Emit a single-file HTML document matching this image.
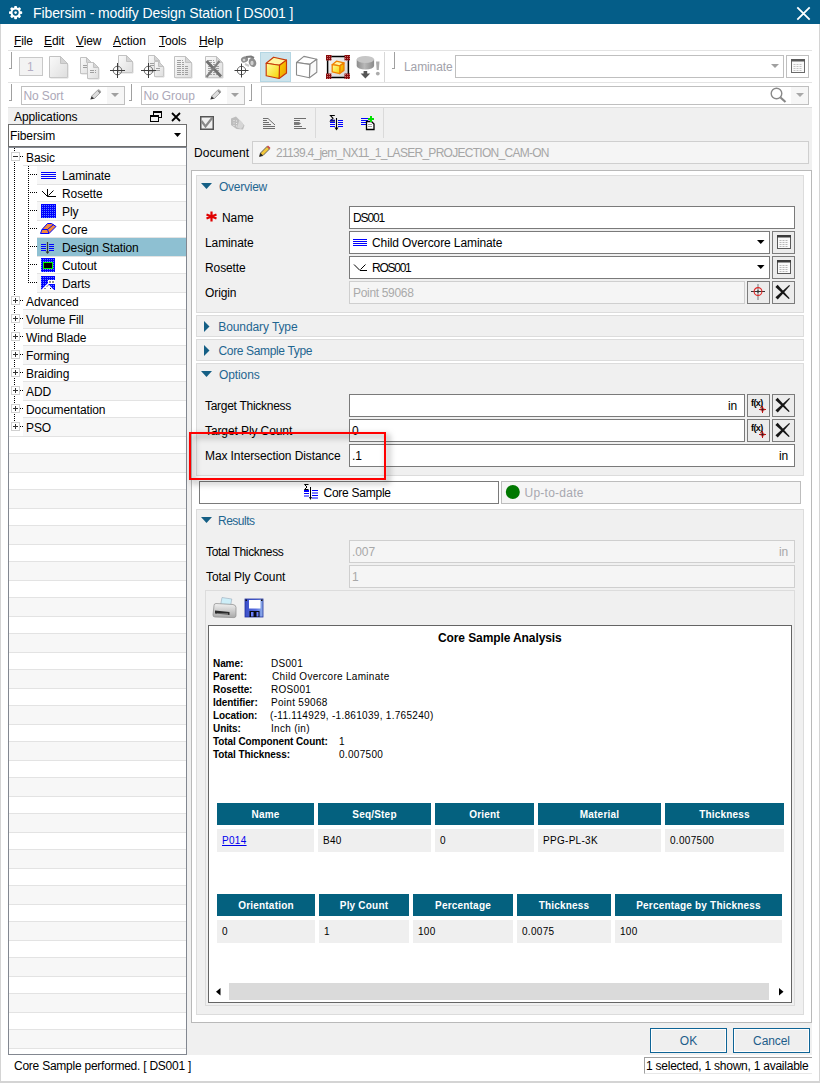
<!DOCTYPE html>
<html><head><meta charset="utf-8">
<style>
*{box-sizing:border-box}
html,body{margin:0;padding:0}
body{width:820px;height:1083px;position:relative;overflow:hidden;background:#fff;font-family:"Liberation Sans",sans-serif;color:#000}
.a{position:absolute;display:block}
.t{position:absolute;white-space:nowrap;letter-spacing:-0.1px}
u{text-decoration:underline;text-underline-offset:1px;text-decoration-thickness:1px}
</style></head><body>
<div class="a" style="left:0px;top:0px;width:820px;height:24px;background:#045d88"></div>
<svg class="a" style="left:9px;top:5.5px;" width="14" height="14" viewBox="0 0 14 14"><g transform="translate(6.6,6.6)" fill="#fff"><rect x="-1.4" y="-6.6" width="2.8" height="3" rx="0.8" transform="rotate(0)"/><rect x="-1.4" y="-6.6" width="2.8" height="3" rx="0.8" transform="rotate(45)"/><rect x="-1.4" y="-6.6" width="2.8" height="3" rx="0.8" transform="rotate(90)"/><rect x="-1.4" y="-6.6" width="2.8" height="3" rx="0.8" transform="rotate(135)"/><rect x="-1.4" y="-6.6" width="2.8" height="3" rx="0.8" transform="rotate(180)"/><rect x="-1.4" y="-6.6" width="2.8" height="3" rx="0.8" transform="rotate(225)"/><rect x="-1.4" y="-6.6" width="2.8" height="3" rx="0.8" transform="rotate(270)"/><rect x="-1.4" y="-6.6" width="2.8" height="3" rx="0.8" transform="rotate(315)"/><circle r="5.1"/><circle r="3.1" fill="#045d88"/><circle r="1.3" fill="#fff"/></g></svg>
<div class="t" style="left:33px;top:6px;font-size:14px;line-height:14px;color:#fff;letter-spacing:-0.1px">Fibersim - modify Design Station [ DS001 ]</div>
<svg class="a" style="left:796px;top:6px;" width="15" height="15" viewBox="0 0 15 15"><path d="M1.3 1.3L13.7 13.7M13.7 1.3L1.3 13.7" stroke="#fff" stroke-width="1.8"/></svg>
<div class="a" style="left:0px;top:24px;width:1px;height:1059px;background:#d4d4d4"></div>
<div class="a" style="left:819px;top:24px;width:1px;height:1059px;background:#d4d4d4"></div>
<div class="a" style="left:0px;top:1081px;width:820px;height:2px;background:#d4d4d4"></div>
<div class="t" style="left:14px;top:35px;font-size:12px;line-height:12px;"><u>F</u>ile</div>
<div class="t" style="left:44px;top:35px;font-size:12px;line-height:12px;"><u>E</u>dit</div>
<div class="t" style="left:76px;top:35px;font-size:12px;line-height:12px;"><u>V</u>iew</div>
<div class="t" style="left:113px;top:35px;font-size:12px;line-height:12px;"><u>A</u>ction</div>
<div class="t" style="left:159px;top:35px;font-size:12px;line-height:12px;"><u>T</u>ools</div>
<div class="t" style="left:199px;top:35px;font-size:12px;line-height:12px;"><u>H</u>elp</div>
<div class="a" style="left:8px;top:50px;width:804px;height:1px;background:#e3e3e3"></div>
<div class="a" style="left:8px;top:82px;width:804px;height:1px;background:#e3e3e3"></div>
<div class="a" style="left:11px;top:52px;width:1px;height:17px;background:#a0a0a0"></div>
<div class="a" style="left:9px;top:68px;width:2px;height:1px;background:#a0a0a0"></div>
<div class="a" style="left:19px;top:57px;width:24px;height:19px;border:1px solid #c8c8c8;background:#f3f3f3"></div>
<div class="t" style="left:27px;top:61px;font-size:12px;line-height:12px;color:#b4aec4">1</div>
<svg class="a" style="left:0;top:0" width="1" height="1"><defs><linearGradient id="pg" x1="0" y1="0" x2="1" y2="1"><stop offset="0" stop-color="#fafafa"/><stop offset="1" stop-color="#dedede"/></linearGradient><linearGradient id="cy" x1="0" y1="0" x2="1" y2="0"><stop offset="0" stop-color="#8c8c8c"/><stop offset="0.45" stop-color="#b8b8b8"/><stop offset="1" stop-color="#8a8a8a"/></linearGradient><linearGradient id="yf" x1="0" y1="0" x2="1" y2="1"><stop offset="0" stop-color="#ffffa0"/><stop offset="1" stop-color="#f6d200"/></linearGradient><linearGradient id="ys" x1="0" y1="0" x2="1" y2="1"><stop offset="0" stop-color="#ffd200"/><stop offset="1" stop-color="#e89a00"/></linearGradient></defs></svg>
<svg class="a" style="left:0;top:0;overflow:visible" width="820" height="140"><path d="M49.5 56.5H60.5L67.5 63.5V77.5H49.5Z" fill="url(#pg)" stroke="#c2c2c2" stroke-width="1"/><path d="M50.5 78.1H68.1V64.5" fill="none" stroke="#d8d8d8" stroke-width="0.8"/><path d="M60.5 56.5V63.5H67.5Z" fill="#d4d4d4" stroke="#c2c2c2" stroke-width="1"/><path d="M80.5 57.5H86.5L91.5 62.5V73.5H80.5Z" fill="url(#pg)" stroke="#c2c2c2" stroke-width="1"/><path d="M81.5 74.1H92.1V63.5" fill="none" stroke="#d8d8d8" stroke-width="0.8"/><path d="M86.5 57.5V62.5H91.5Z" fill="#d4d4d4" stroke="#c2c2c2" stroke-width="1"/><path d="M83 65.5H88" stroke="#a0a0a0" stroke-width="1" stroke-dasharray="4 1 2 1 5 1"/><path d="M83 67.5H88" stroke="#a0a0a0" stroke-width="1" stroke-dasharray="4 1 2 1 5 1"/><path d="M87.5 62.5H93.5L98.5 67.5V78.5H87.5Z" fill="url(#pg)" stroke="#c2c2c2" stroke-width="1"/><path d="M88.5 79.1H99.1V68.5" fill="none" stroke="#d8d8d8" stroke-width="0.8"/><path d="M93.5 62.5V67.5H98.5Z" fill="#d4d4d4" stroke="#c2c2c2" stroke-width="1"/><path d="M90 70.5H96" stroke="#a0a0a0" stroke-width="1" stroke-dasharray="4 1 2 1 5 1"/><path d="M90 72.5H96" stroke="#a0a0a0" stroke-width="1" stroke-dasharray="4 1 2 1 5 1"/><path d="M118.5 55.5H126.5L132.5 61.5V72.5H118.5Z" fill="url(#pg)" stroke="#c2c2c2" stroke-width="1"/><path d="M119.5 73.1H133.1V62.5" fill="none" stroke="#d8d8d8" stroke-width="0.8"/><path d="M126.5 55.5V61.5H132.5Z" fill="#d4d4d4" stroke="#c2c2c2" stroke-width="1"/><circle cx="117.5" cy="70.5" r="4.3" fill="none" stroke="#6a6a6a" stroke-width="1"/><path d="M110.0 70.5H125.0M117.5 63.0V78.0" stroke="#3c3c3c" stroke-width="1"/><path d="M148.5 55.5H154.5L159.5 60.5V71.5H148.5Z" fill="url(#pg)" stroke="#c2c2c2" stroke-width="1"/><path d="M149.5 72.1H160.1V61.5" fill="none" stroke="#d8d8d8" stroke-width="0.8"/><path d="M154.5 55.5V60.5H159.5Z" fill="#d4d4d4" stroke="#c2c2c2" stroke-width="1"/><path d="M150 63.5H155" stroke="#a0a0a0" stroke-width="1" stroke-dasharray="4 1 2 1 5 1"/><path d="M150 65.5H155" stroke="#a0a0a0" stroke-width="1" stroke-dasharray="4 1 2 1 5 1"/><path d="M154.5 61.5H158.5L163.5 66.5V76.5H154.5Z" fill="url(#pg)" stroke="#c2c2c2" stroke-width="1"/><path d="M155.5 77.1H164.1V67.5" fill="none" stroke="#d8d8d8" stroke-width="0.8"/><path d="M158.5 61.5V66.5H163.5Z" fill="#d4d4d4" stroke="#c2c2c2" stroke-width="1"/><path d="M156 68.5H161" stroke="#a0a0a0" stroke-width="1" stroke-dasharray="4 1 2 1 5 1"/><path d="M156 70.5H161" stroke="#a0a0a0" stroke-width="1" stroke-dasharray="4 1 2 1 5 1"/><circle cx="148.5" cy="70.5" r="4.3" fill="none" stroke="#6a6a6a" stroke-width="1"/><path d="M141.0 70.5H156.0M148.5 63.0V78.0" stroke="#3c3c3c" stroke-width="1"/><path d="M174.5 56.5H185.5L191.5 62.5V77.5H174.5Z" fill="url(#pg)" stroke="#c2c2c2" stroke-width="1"/><path d="M175.5 78.1H192.1V63.5" fill="none" stroke="#d8d8d8" stroke-width="0.8"/><path d="M185.5 56.5V62.5H191.5Z" fill="#d4d4d4" stroke="#c2c2c2" stroke-width="1"/><path d="M177 60.5H183" stroke="#a0a0a0" stroke-width="1" stroke-dasharray="4 1 2 1 5 1"/><path d="M177 62.5H185" stroke="#a0a0a0" stroke-width="1" stroke-dasharray="4 1 2 1 5 1"/><path d="M177 64.5H185" stroke="#a0a0a0" stroke-width="1" stroke-dasharray="4 1 2 1 5 1"/><path d="M177 66.5H188" stroke="#a0a0a0" stroke-width="1" stroke-dasharray="4 1 2 1 5 1"/><path d="M177 68.5H188" stroke="#a0a0a0" stroke-width="1" stroke-dasharray="4 1 2 1 5 1"/><path d="M177 70.5H188" stroke="#a0a0a0" stroke-width="1" stroke-dasharray="4 1 2 1 5 1"/><path d="M177 72.5H188" stroke="#a0a0a0" stroke-width="1" stroke-dasharray="4 1 2 1 5 1"/><path d="M177 74.5H188" stroke="#a0a0a0" stroke-width="1" stroke-dasharray="4 1 2 1 5 1"/><path d="M205.5 56.5H216.5L222.5 62.5V77.5H205.5Z" fill="url(#pg)" stroke="#c2c2c2" stroke-width="1"/><path d="M206.5 78.1H223.1V63.5" fill="none" stroke="#d8d8d8" stroke-width="0.8"/><path d="M216.5 56.5V62.5H222.5Z" fill="#d4d4d4" stroke="#c2c2c2" stroke-width="1"/><path d="M208 60.5H214" stroke="#a0a0a0" stroke-width="1" stroke-dasharray="4 1 2 1 5 1"/><path d="M208 62.5H216" stroke="#a0a0a0" stroke-width="1" stroke-dasharray="4 1 2 1 5 1"/><path d="M208 64.5H216" stroke="#a0a0a0" stroke-width="1" stroke-dasharray="4 1 2 1 5 1"/><path d="M208 66.5H219" stroke="#a0a0a0" stroke-width="1" stroke-dasharray="4 1 2 1 5 1"/><path d="M208 68.5H219" stroke="#a0a0a0" stroke-width="1" stroke-dasharray="4 1 2 1 5 1"/><path d="M208 70.5H219" stroke="#a0a0a0" stroke-width="1" stroke-dasharray="4 1 2 1 5 1"/><path d="M208 72.5H219" stroke="#a0a0a0" stroke-width="1" stroke-dasharray="4 1 2 1 5 1"/><path d="M208 74.5H219" stroke="#a0a0a0" stroke-width="1" stroke-dasharray="4 1 2 1 5 1"/><path d="M206.5 61L221 76.5" stroke="#707070" stroke-width="2.8"/><path d="M219.5 61L206.5 77" stroke="#808080" stroke-width="2.1"/><ellipse cx="244.5" cy="59.5" rx="3.6" ry="3" fill="#8e8e8e" transform="rotate(-20 244.5 59.5)"/><ellipse cx="252.5" cy="62.5" rx="3.6" ry="4.6" fill="#8e8e8e" transform="rotate(-25 252.5 62.5)"/><path d="M246 57L251 56.5L254 58" stroke="#7a7a7a" stroke-width="2" fill="none"/><ellipse cx="252" cy="63" rx="1.6" ry="2.2" fill="#d0d0d0"/><ellipse cx="244" cy="60" rx="1.4" ry="1.2" fill="#d0d0d0"/><path d="M245 64L249 66" stroke="#c8c8c8" stroke-width="2"/><circle cx="241.5" cy="70.5" r="4.2" fill="none" stroke="#6a6a6a" stroke-width="1"/><path d="M234.5 70.5H248.5M241.5 63.5V77.5" stroke="#3c3c3c" stroke-width="1"/></svg>
<div class="a" style="left:260px;top:52px;width:31px;height:30px;background:#cde4ec;border:1px solid #b4d6e3"></div>
<svg class="a" style="left:0;top:0;overflow:visible" width="820" height="140"><path d="M266.20 63.30L273.60 57.20L286.50 60.10L279.50 65.20Z" fill="#fff6a0" stroke="#c83a08" stroke-width="1.15" stroke-linejoin="round"/><path d="M279.50 65.20L286.50 60.10L286.50 73.00L279.10 78.50Z" fill="url(#ys)" stroke="#c83a08" stroke-width="1.15" stroke-linejoin="round"/><path d="M266.20 63.30L279.50 65.20L279.10 78.50L266.20 75.80Z" fill="url(#yf)" stroke="#c83a08" stroke-width="1.15" stroke-linejoin="round"/><path d="M296.50 62.50L303.90 56.40L316.80 59.30L309.80 64.40Z" fill="#fff" stroke="#8a8a8a" stroke-width="1.1" stroke-linejoin="round"/><path d="M309.80 64.40L316.80 59.30L316.80 72.20L309.40 77.70Z" fill="#fafafa" stroke="#8a8a8a" stroke-width="1.1" stroke-linejoin="round"/><path d="M296.50 62.50L309.80 64.40L309.40 77.70L296.50 75.00Z" fill="#fff" stroke="#8a8a8a" stroke-width="1.1" stroke-linejoin="round"/></svg>
<svg class="a" style="left:325px;top:54px;" width="26" height="26" viewBox="0 0 26 26"><defs><linearGradient id="sf" x1="0" y1="0" x2="1" y2="1"><stop offset="0" stop-color="#f4f4f4"/><stop offset="1" stop-color="#d4d4d4"/></linearGradient><pattern id="ck" width="2" height="2" patternUnits="userSpaceOnUse"><rect width="2" height="2" fill="#8a0c0c"/><rect width="1" height="1" fill="#c87070"/></pattern></defs><rect x="2.6" y="2.6" width="20.8" height="20.8" rx="2.5" fill="url(#sf)" stroke="#000" stroke-width="1.5"/><rect x="1" y="1" width="5.5" height="5.5" fill="url(#ck)"/><rect x="19.5" y="1" width="5.5" height="5.5" fill="url(#ck)"/><rect x="1" y="19.5" width="5.5" height="5.5" fill="url(#ck)"/><rect x="19.5" y="19.5" width="5.5" height="5.5" fill="url(#ck)"/></svg>
<svg class="a" style="left:0;top:0;overflow:visible" width="820" height="140"><path d="M332.20 64.73L336.49 61.20L343.97 62.88L339.91 65.84Z" fill="#fff6a0" stroke="#f08000" stroke-width="1.3" stroke-linejoin="round"/><path d="M339.91 65.84L343.97 62.88L343.97 70.36L339.68 73.55Z" fill="url(#ys)" stroke="#f08000" stroke-width="1.3" stroke-linejoin="round"/><path d="M332.20 64.73L339.91 65.84L339.68 73.55L332.20 71.98Z" fill="url(#yf)" stroke="#f08000" stroke-width="1.3" stroke-linejoin="round"/></svg>
<svg class="a" style="left:356px;top:55px;" width="25" height="24" viewBox="0 0 25 24"><path d="M0.7 4.5V11A8.7 3.4 0 0 0 18.1 11V4.5Z" fill="url(#cy)"/><ellipse cx="9.4" cy="4.5" rx="8.7" ry="3.4" fill="#c6c6c6"/><path d="M7.6 16H11.2V18.5H14.2L9.4 23.5L4.6 18.5H7.6Z" fill="#555"/><path d="M20 6.5H23.5L22.8 15H20.7Z" fill="#ababab"/><circle cx="21.8" cy="18.6" r="1.9" fill="#ababab"/></svg>
<div class="a" style="left:384px;top:52px;width:1px;height:30px;background:#d8d8d8"></div>
<div class="a" style="left:394px;top:52px;width:1px;height:17px;background:#a0a0a0"></div>
<div class="a" style="left:392px;top:68px;width:2px;height:1px;background:#a0a0a0"></div>
<div class="t" style="left:404px;top:61px;font-size:12px;line-height:12px;color:#a2a2aa">Laminate</div>
<div class="a" style="left:455px;top:55px;width:329px;height:23px;border:1px solid #bfbfbf;background:#fff"></div>
<svg class="a" style="left:771px;top:64px;" width="9" height="5" viewBox="0 0 9 5"><path d="M0 0H8L4 4Z" fill="#a0a0a0"/></svg>
<div class="a" style="left:786px;top:55px;width:23px;height:23px;border:1px solid #bfbfbf;background:#fff"></div>
<svg class="a" style="left:791px;top:59px;" width="15" height="15" viewBox="0 0 15 15"><rect x="0.5" y="0.5" width="13" height="13" fill="#fafafa" stroke="#6a6a6a"/><rect x="0" y="0" width="14" height="2.5" fill="#5a5a5a"/><path d="M2.5 5.5H11.5M2.5 7.5H11.5M2.5 9.5H11.5M2.5 11.5H11.5" stroke="#c4c4c4" stroke-width="1" stroke-dasharray="2 1"/></svg>
<div class="a" style="left:11px;top:84px;width:1px;height:17px;background:#a0a0a0"></div>
<div class="a" style="left:9px;top:100px;width:2px;height:1px;background:#a0a0a0"></div>
<div class="a" style="left:21px;top:86px;width:104px;height:19px;border:1px solid #bfbfbf;background:#fff"></div>
<div class="t" style="left:23.5px;top:90px;font-size:12px;line-height:12px;color:#aca8b8">No Sort</div>
<div class="a" style="left:107px;top:87px;width:17px;height:17px;background:#f6f6f6"></div>
<svg class="a" style="left:111px;top:93px;" width="9" height="5" viewBox="0 0 9 5"><path d="M0 0H8L4 4Z" fill="#a0a0a0"/></svg>
<svg class="a" style="left:89px;top:87px;" width="15" height="15" viewBox="0 0 15 15"><g transform="translate(0 1) scale(0.86)"><path d="M3 9.5L10 2.5Q11.3 1.5 12.5 2.7L13 3.3Q14 4.5 13 5.5L6 12.5Z" fill="#dcdcdc" stroke="#8c8c8c" stroke-width="0.9"/><path d="M3 9.5L6 12.5L1.5 13.5Z" fill="#333"/><path d="M10.5 3L13 5.5" stroke="#777" stroke-width="1.3"/></g></svg>
<div class="a" style="left:131px;top:84px;width:1px;height:17px;background:#a0a0a0"></div>
<div class="a" style="left:129px;top:100px;width:2px;height:1px;background:#a0a0a0"></div>
<div class="a" style="left:141px;top:86px;width:104px;height:19px;border:1px solid #bfbfbf;background:#fff"></div>
<div class="t" style="left:143.5px;top:90px;font-size:12px;line-height:12px;color:#aca8b8">No Group</div>
<div class="a" style="left:227px;top:87px;width:17px;height:17px;background:#f6f6f6"></div>
<svg class="a" style="left:231px;top:93px;" width="9" height="5" viewBox="0 0 9 5"><path d="M0 0H8L4 4Z" fill="#a0a0a0"/></svg>
<svg class="a" style="left:209px;top:87px;" width="15" height="15" viewBox="0 0 15 15"><g transform="translate(0 1) scale(0.86)"><path d="M3 9.5L10 2.5Q11.3 1.5 12.5 2.7L13 3.3Q14 4.5 13 5.5L6 12.5Z" fill="#dcdcdc" stroke="#8c8c8c" stroke-width="0.9"/><path d="M3 9.5L6 12.5L1.5 13.5Z" fill="#333"/><path d="M10.5 3L13 5.5" stroke="#777" stroke-width="1.3"/></g></svg>
<div class="a" style="left:251px;top:84px;width:1px;height:17px;background:#a0a0a0"></div>
<div class="a" style="left:249px;top:100px;width:2px;height:1px;background:#a0a0a0"></div>
<div class="a" style="left:261px;top:86px;width:548px;height:19px;border:1px solid #bfbfbf;background:#fff"></div>
<div class="a" style="left:791px;top:87px;width:17px;height:17px;background:#f6f6f6"></div>
<svg class="a" style="left:796px;top:93px;" width="9" height="5" viewBox="0 0 9 5"><path d="M0 0H8L4 4Z" fill="#a8a8a8"/></svg>
<svg class="a" style="left:770px;top:87px;" width="18" height="16" viewBox="0 0 18 16"><circle cx="6.5" cy="6.5" r="5.3" fill="none" stroke="#888" stroke-width="1.4"/><path d="M10.5 10.5L15.5 15" stroke="#888" stroke-width="2.2"/></svg>
<div class="a" style="left:8px;top:107px;width:804px;height:948px;background:#f0f0f0"></div>
<div class="a" style="left:8px;top:107px;width:804px;height:1px;background:#dcdcdc"></div>
<div class="t" style="left:14px;top:111px;font-size:12px;line-height:12px;">Applications</div>
<svg class="a" style="left:150px;top:111px;" width="12" height="11" viewBox="0 0 12 11"><rect x="3.5" y="0.5" width="8" height="6" fill="none" stroke="#000"/><rect x="3" y="0" width="9" height="2" fill="#000"/><rect x="0.5" y="4.5" width="8" height="6" fill="#f0f0f0" stroke="#000"/><rect x="0" y="4" width="9" height="2" fill="#000"/></svg>
<svg class="a" style="left:171px;top:112px;" width="10" height="10" viewBox="0 0 10 10"><path d="M1 1L9 9M9 1L1 9" stroke="#000" stroke-width="1.8"/></svg>
<div class="a" style="left:8px;top:124px;width:179px;height:23px;border:1px solid #6e6e6e;background:#fff"></div>
<div class="t" style="left:10px;top:130px;font-size:12px;line-height:12px;">Fibersim</div>
<svg class="a" style="left:174px;top:133px;" width="8" height="5" viewBox="0 0 8 5"><path d="M0 0H7L3.5 4Z" fill="#000"/></svg>
<div class="a" style="left:8px;top:147px;width:179px;height:908px;border:1px solid #828790;background:#fff"></div>
<div class="a" style="left:23px;top:165px;width:163px;height:1px;background:#e3e3e3"></div>
<div class="a" style="left:37px;top:166px;width:149px;height:18px;background:#f7f7f7"></div>
<div class="a" style="left:37px;top:184px;width:149px;height:1px;background:#e3e3e3"></div>
<div class="a" style="left:37px;top:201px;width:149px;height:1px;background:#e3e3e3"></div>
<div class="a" style="left:37px;top:202px;width:149px;height:18px;background:#f7f7f7"></div>
<div class="a" style="left:37px;top:220px;width:149px;height:1px;background:#e3e3e3"></div>
<div class="a" style="left:37px;top:237px;width:149px;height:1px;background:#e3e3e3"></div>
<div class="a" style="left:37px;top:238px;width:149px;height:18px;background:#8ec0d2"></div>
<div class="a" style="left:37px;top:256px;width:149px;height:1px;background:#e3e3e3"></div>
<div class="a" style="left:37px;top:273px;width:149px;height:1px;background:#e3e3e3"></div>
<div class="a" style="left:37px;top:274px;width:149px;height:18px;background:#f7f7f7"></div>
<div class="a" style="left:37px;top:292px;width:149px;height:1px;background:#e3e3e3"></div>
<div class="a" style="left:23px;top:309px;width:163px;height:1px;background:#e3e3e3"></div>
<div class="a" style="left:23px;top:310px;width:163px;height:18px;background:#f7f7f7"></div>
<div class="a" style="left:23px;top:328px;width:163px;height:1px;background:#e3e3e3"></div>
<div class="a" style="left:23px;top:345px;width:163px;height:1px;background:#e3e3e3"></div>
<div class="a" style="left:23px;top:346px;width:163px;height:18px;background:#f7f7f7"></div>
<div class="a" style="left:23px;top:364px;width:163px;height:1px;background:#e3e3e3"></div>
<div class="a" style="left:23px;top:381px;width:163px;height:1px;background:#e3e3e3"></div>
<div class="a" style="left:23px;top:382px;width:163px;height:18px;background:#f7f7f7"></div>
<div class="a" style="left:23px;top:400px;width:163px;height:1px;background:#e3e3e3"></div>
<div class="a" style="left:23px;top:417px;width:163px;height:1px;background:#e3e3e3"></div>
<div class="a" style="left:23px;top:418px;width:163px;height:18px;background:#f7f7f7"></div>
<div class="a" style="left:9px;top:436px;width:177px;height:1px;background:#e3e3e3"></div>
<div class="a" style="left:9px;top:453px;width:177px;height:1px;background:#e3e3e3"></div>
<div class="a" style="left:9px;top:454px;width:177px;height:18px;background:#f7f7f7"></div>
<div class="a" style="left:9px;top:472px;width:177px;height:1px;background:#e3e3e3"></div>
<div class="a" style="left:9px;top:489px;width:177px;height:1px;background:#e3e3e3"></div>
<div class="a" style="left:9px;top:490px;width:177px;height:18px;background:#f7f7f7"></div>
<div class="a" style="left:9px;top:508px;width:177px;height:1px;background:#e3e3e3"></div>
<div class="a" style="left:9px;top:525px;width:177px;height:1px;background:#e3e3e3"></div>
<div class="a" style="left:9px;top:526px;width:177px;height:18px;background:#f7f7f7"></div>
<div class="a" style="left:9px;top:544px;width:177px;height:1px;background:#e3e3e3"></div>
<div class="a" style="left:9px;top:561px;width:177px;height:1px;background:#e3e3e3"></div>
<div class="a" style="left:9px;top:562px;width:177px;height:18px;background:#f7f7f7"></div>
<div class="a" style="left:9px;top:580px;width:177px;height:1px;background:#e3e3e3"></div>
<div class="a" style="left:9px;top:597px;width:177px;height:1px;background:#e3e3e3"></div>
<div class="a" style="left:9px;top:598px;width:177px;height:18px;background:#f7f7f7"></div>
<div class="a" style="left:9px;top:616px;width:177px;height:1px;background:#e3e3e3"></div>
<div class="a" style="left:9px;top:633px;width:177px;height:1px;background:#e3e3e3"></div>
<div class="a" style="left:9px;top:634px;width:177px;height:18px;background:#f7f7f7"></div>
<div class="a" style="left:9px;top:652px;width:177px;height:1px;background:#e3e3e3"></div>
<div class="a" style="left:9px;top:669px;width:177px;height:1px;background:#e3e3e3"></div>
<div class="a" style="left:9px;top:670px;width:177px;height:18px;background:#f7f7f7"></div>
<div class="a" style="left:9px;top:688px;width:177px;height:1px;background:#e3e3e3"></div>
<div class="a" style="left:9px;top:705px;width:177px;height:1px;background:#e3e3e3"></div>
<div class="a" style="left:9px;top:706px;width:177px;height:18px;background:#f7f7f7"></div>
<div class="a" style="left:9px;top:724px;width:177px;height:1px;background:#e3e3e3"></div>
<div class="a" style="left:9px;top:741px;width:177px;height:1px;background:#e3e3e3"></div>
<div class="a" style="left:9px;top:742px;width:177px;height:18px;background:#f7f7f7"></div>
<div class="a" style="left:9px;top:760px;width:177px;height:1px;background:#e3e3e3"></div>
<div class="a" style="left:9px;top:777px;width:177px;height:1px;background:#e3e3e3"></div>
<div class="a" style="left:9px;top:778px;width:177px;height:18px;background:#f7f7f7"></div>
<div class="a" style="left:9px;top:796px;width:177px;height:1px;background:#e3e3e3"></div>
<div class="a" style="left:9px;top:813px;width:177px;height:1px;background:#e3e3e3"></div>
<div class="a" style="left:9px;top:814px;width:177px;height:18px;background:#f7f7f7"></div>
<div class="a" style="left:9px;top:832px;width:177px;height:1px;background:#e3e3e3"></div>
<div class="a" style="left:9px;top:849px;width:177px;height:1px;background:#e3e3e3"></div>
<div class="a" style="left:9px;top:850px;width:177px;height:18px;background:#f7f7f7"></div>
<div class="a" style="left:9px;top:868px;width:177px;height:1px;background:#e3e3e3"></div>
<div class="a" style="left:9px;top:885px;width:177px;height:1px;background:#e3e3e3"></div>
<div class="a" style="left:9px;top:886px;width:177px;height:18px;background:#f7f7f7"></div>
<div class="a" style="left:9px;top:904px;width:177px;height:1px;background:#e3e3e3"></div>
<div class="a" style="left:9px;top:921px;width:177px;height:1px;background:#e3e3e3"></div>
<div class="a" style="left:9px;top:922px;width:177px;height:18px;background:#f7f7f7"></div>
<div class="a" style="left:9px;top:940px;width:177px;height:1px;background:#e3e3e3"></div>
<div class="a" style="left:9px;top:957px;width:177px;height:1px;background:#e3e3e3"></div>
<div class="a" style="left:9px;top:958px;width:177px;height:18px;background:#f7f7f7"></div>
<div class="a" style="left:9px;top:976px;width:177px;height:1px;background:#e3e3e3"></div>
<div class="a" style="left:9px;top:993px;width:177px;height:1px;background:#e3e3e3"></div>
<div class="a" style="left:9px;top:994px;width:177px;height:18px;background:#f7f7f7"></div>
<div class="a" style="left:9px;top:1012px;width:177px;height:1px;background:#e3e3e3"></div>
<div class="a" style="left:9px;top:1029px;width:177px;height:1px;background:#e3e3e3"></div>
<div class="a" style="left:9px;top:1030px;width:177px;height:18px;background:#f7f7f7"></div>
<div class="a" style="left:9px;top:1048px;width:177px;height:1px;background:#e3e3e3"></div>
<div class="a" style="left:14px;top:148px;width:1px;height:274px;background:repeating-linear-gradient(to bottom,#000 0 1px,transparent 1px 2px)"></div>
<div class="a" style="left:28px;top:166px;width:1px;height:117px;background:repeating-linear-gradient(to bottom,#000 0 1px,transparent 1px 2px)"></div>
<div class="a" style="left:11px;top:152px;width:9px;height:9px;border:1px solid #d0d0d0;background:#fff"></div>
<div class="a" style="left:13px;top:156px;width:5px;height:1px;background:#333"></div>
<div class="a" style="left:20px;top:156px;width:4px;height:1px;background:repeating-linear-gradient(to right,#000 0 1px,transparent 1px 2px)"></div>
<div class="t" style="left:26px;top:152px;font-size:12px;line-height:12px;">Basic</div>
<div class="a" style="left:30px;top:174px;width:7px;height:1px;background:repeating-linear-gradient(to right,#000 0 1px,transparent 1px 2px)"></div>
<div class="t" style="left:62px;top:170px;font-size:12px;line-height:12px;">Laminate</div>
<div class="a" style="left:30px;top:192px;width:7px;height:1px;background:repeating-linear-gradient(to right,#000 0 1px,transparent 1px 2px)"></div>
<div class="t" style="left:62px;top:188px;font-size:12px;line-height:12px;">Rosette</div>
<div class="a" style="left:30px;top:210px;width:7px;height:1px;background:repeating-linear-gradient(to right,#000 0 1px,transparent 1px 2px)"></div>
<div class="t" style="left:62px;top:206px;font-size:12px;line-height:12px;">Ply</div>
<div class="a" style="left:30px;top:228px;width:7px;height:1px;background:repeating-linear-gradient(to right,#000 0 1px,transparent 1px 2px)"></div>
<div class="t" style="left:62px;top:224px;font-size:12px;line-height:12px;">Core</div>
<div class="a" style="left:30px;top:246px;width:7px;height:1px;background:repeating-linear-gradient(to right,#000 0 1px,transparent 1px 2px)"></div>
<div class="t" style="left:62px;top:242px;font-size:12px;line-height:12px;">Design Station</div>
<div class="a" style="left:30px;top:264px;width:7px;height:1px;background:repeating-linear-gradient(to right,#000 0 1px,transparent 1px 2px)"></div>
<div class="t" style="left:62px;top:260px;font-size:12px;line-height:12px;">Cutout</div>
<div class="a" style="left:30px;top:282px;width:7px;height:1px;background:repeating-linear-gradient(to right,#000 0 1px,transparent 1px 2px)"></div>
<div class="t" style="left:62px;top:278px;font-size:12px;line-height:12px;">Darts</div>
<div class="a" style="left:11px;top:296px;width:9px;height:9px;border:1px solid #d0d0d0;background:#fff"></div>
<div class="a" style="left:13px;top:300px;width:5px;height:1px;background:#333"></div>
<div class="a" style="left:15px;top:298px;width:1px;height:5px;background:#333"></div>
<div class="a" style="left:20px;top:300px;width:4px;height:1px;background:repeating-linear-gradient(to right,#000 0 1px,transparent 1px 2px)"></div>
<div class="t" style="left:26px;top:296px;font-size:12px;line-height:12px;">Advanced</div>
<div class="a" style="left:11px;top:314px;width:9px;height:9px;border:1px solid #d0d0d0;background:#fff"></div>
<div class="a" style="left:13px;top:318px;width:5px;height:1px;background:#333"></div>
<div class="a" style="left:15px;top:316px;width:1px;height:5px;background:#333"></div>
<div class="a" style="left:20px;top:318px;width:4px;height:1px;background:repeating-linear-gradient(to right,#000 0 1px,transparent 1px 2px)"></div>
<div class="t" style="left:26px;top:314px;font-size:12px;line-height:12px;">Volume Fill</div>
<div class="a" style="left:11px;top:332px;width:9px;height:9px;border:1px solid #d0d0d0;background:#fff"></div>
<div class="a" style="left:13px;top:336px;width:5px;height:1px;background:#333"></div>
<div class="a" style="left:15px;top:334px;width:1px;height:5px;background:#333"></div>
<div class="a" style="left:20px;top:336px;width:4px;height:1px;background:repeating-linear-gradient(to right,#000 0 1px,transparent 1px 2px)"></div>
<div class="t" style="left:26px;top:332px;font-size:12px;line-height:12px;">Wind Blade</div>
<div class="a" style="left:11px;top:350px;width:9px;height:9px;border:1px solid #d0d0d0;background:#fff"></div>
<div class="a" style="left:13px;top:354px;width:5px;height:1px;background:#333"></div>
<div class="a" style="left:15px;top:352px;width:1px;height:5px;background:#333"></div>
<div class="a" style="left:20px;top:354px;width:4px;height:1px;background:repeating-linear-gradient(to right,#000 0 1px,transparent 1px 2px)"></div>
<div class="t" style="left:26px;top:350px;font-size:12px;line-height:12px;">Forming</div>
<div class="a" style="left:11px;top:368px;width:9px;height:9px;border:1px solid #d0d0d0;background:#fff"></div>
<div class="a" style="left:13px;top:372px;width:5px;height:1px;background:#333"></div>
<div class="a" style="left:15px;top:370px;width:1px;height:5px;background:#333"></div>
<div class="a" style="left:20px;top:372px;width:4px;height:1px;background:repeating-linear-gradient(to right,#000 0 1px,transparent 1px 2px)"></div>
<div class="t" style="left:26px;top:368px;font-size:12px;line-height:12px;">Braiding</div>
<div class="a" style="left:11px;top:386px;width:9px;height:9px;border:1px solid #d0d0d0;background:#fff"></div>
<div class="a" style="left:13px;top:390px;width:5px;height:1px;background:#333"></div>
<div class="a" style="left:15px;top:388px;width:1px;height:5px;background:#333"></div>
<div class="a" style="left:20px;top:390px;width:4px;height:1px;background:repeating-linear-gradient(to right,#000 0 1px,transparent 1px 2px)"></div>
<div class="t" style="left:26px;top:386px;font-size:12px;line-height:12px;">ADD</div>
<div class="a" style="left:11px;top:404px;width:9px;height:9px;border:1px solid #d0d0d0;background:#fff"></div>
<div class="a" style="left:13px;top:408px;width:5px;height:1px;background:#333"></div>
<div class="a" style="left:15px;top:406px;width:1px;height:5px;background:#333"></div>
<div class="a" style="left:20px;top:408px;width:4px;height:1px;background:repeating-linear-gradient(to right,#000 0 1px,transparent 1px 2px)"></div>
<div class="t" style="left:26px;top:404px;font-size:12px;line-height:12px;">Documentation</div>
<div class="a" style="left:11px;top:422px;width:9px;height:9px;border:1px solid #d0d0d0;background:#fff"></div>
<div class="a" style="left:13px;top:426px;width:5px;height:1px;background:#333"></div>
<div class="a" style="left:15px;top:424px;width:1px;height:5px;background:#333"></div>
<div class="a" style="left:20px;top:426px;width:4px;height:1px;background:repeating-linear-gradient(to right,#000 0 1px,transparent 1px 2px)"></div>
<div class="t" style="left:26px;top:422px;font-size:12px;line-height:12px;">PSO</div>
<svg class="a" style="left:40px;top:166px;" width="16" height="16" viewBox="0 0 16 16"><path d="M1 6.5H16M1 8.5H16M1 10.5H16M1 12.5H16" stroke="#0000ff" stroke-width="1"/></svg>
<svg class="a" style="left:40px;top:184px;" width="16" height="16" viewBox="0 0 16 16"><path d="M7.5 5V12.5H16M2 7L7.5 12.5M8.5 11.5L13.5 6.5" stroke="#000" stroke-width="1" fill="none"/></svg>
<svg class="a" style="left:40px;top:202px;" width="16" height="16" viewBox="0 0 16 16"><defs><pattern id="pd" width="2" height="2" patternUnits="userSpaceOnUse" x="0" y="0"><rect width="2" height="2" fill="#0000ff"/><rect x="0" y="1" width="1" height="1" fill="#5f7fff"/></pattern></defs><rect x="1" y="2" width="15" height="14" fill="url(#pd)"/></svg>
<svg class="a" style="left:40px;top:220px;" width="17" height="16" viewBox="0 0 17 16"><path d="M0.5 13.5L2 9.5L7.5 3.5H11.5L16 6.5L9 13.5Z" fill="#f5883a" stroke="#0000ff" stroke-width="1"/><path d="M2 9.5H7.5L9 13.5M7.5 9.5L13.5 4.5" stroke="#0000ff" stroke-width="1" fill="none"/></svg>
<svg class="a" style="left:40px;top:238px;" width="16" height="17" viewBox="0 0 16 17"><path d="M1 6.5H6M1 8.5H6M1 10.5H6M1 12.5H6M9 6.5H14M9 8.5H14M9 10.5H14M9 12.5H14" stroke="#0000ff" stroke-width="1"/><path d="M7.5 4V15" stroke="#333" stroke-width="1.2"/><path d="M5.5 13.5H9.5L7.5 16Z" fill="#333"/></svg>
<svg class="a" style="left:40px;top:256px;" width="16" height="17" viewBox="0 0 16 17"><defs><pattern id="pc" width="2" height="2" patternUnits="userSpaceOnUse"><rect width="2" height="2" fill="#0000ff"/><rect x="1" y="1" width="1" height="1" fill="#5f7fff"/></pattern></defs><rect x="1" y="2" width="14" height="14" fill="url(#pc)"/><rect x="3.5" y="6.5" width="9" height="6" fill="#000" stroke="#00ff00" stroke-width="1"/></svg>
<svg class="a" style="left:40px;top:274px;" width="16" height="17" viewBox="0 0 16 17"><rect x="1" y="2" width="14" height="14" fill="url(#pc)"/><rect x="8" y="6" width="7" height="4" fill="#fff"/><path d="M9 8H11M12 8H14" stroke="#222" stroke-width="1"/><path d="M1 16L7.5 9.5L14 16Z" fill="#fff"/><path d="M4.5 15L5.5 14M7 12.5L8 11.5M10 14L11 15" stroke="#222" stroke-width="1"/></svg>
<svg class="a" style="left:200px;top:116px;" width="14" height="14" viewBox="0 0 14 14"><rect x="0.75" y="0.75" width="12.5" height="12.5" fill="none" stroke="#555" stroke-width="1.5"/><path d="M1.5 5L5.5 10.5L12.5 1.5" stroke="#8a8a8a" stroke-width="2.2" fill="none"/></svg>
<svg class="a" style="left:231px;top:116px;" width="14" height="14" viewBox="0 0 14 14"><path d="M0 2.5L5 0.5L8.5 4L13.5 9.5L12 13.5L5.5 13L0 9Z" fill="#bdbdbd"/><path d="M8.5 4Q12 6 12.5 10L10 13L6 11.5Z" fill="#d6d6d6"/><path d="M2.5 4.5H3.5M2.5 7H3.5M2.5 9.5H3.5M5 5H6M5 7.5H6M5 10H6" stroke="#eee" stroke-width="1"/></svg>
<svg class="a" style="left:0;top:0;overflow:visible" width="820" height="140"><path d="M263 118.5H268" stroke="#6e6e6e" stroke-width="1"/><path d="M263 120.5H267" stroke="#6e6e6e" stroke-width="1"/><path d="M263 122.5H269" stroke="#6e6e6e" stroke-width="1"/><path d="M263 124.5H271" stroke="#6e6e6e" stroke-width="1"/><path d="M263 126.5H275" stroke="#6e6e6e" stroke-width="1"/><path d="M263 128.5H275" stroke="#6e6e6e" stroke-width="1"/><path d="M268 118.5L275 125" stroke="#6e6e6e" stroke-width="1"/><path d="M294 118.5H306" stroke="#6e6e6e" stroke-width="1"/><path d="M294 120.5H300" stroke="#6e6e6e" stroke-width="1"/><path d="M294 126.5H302" stroke="#6e6e6e" stroke-width="1"/><path d="M294 128.5H306" stroke="#6e6e6e" stroke-width="1"/><path d="M294 122H299L301 123.5L299 125H294Z" fill="#7a7a7a"/><path d="M334.8 115.5H330.5L333 118.3L330.5 121H335" stroke="#000" stroke-width="1.1" fill="none"/><path d="M330 120.5H335" stroke="#0000a0" stroke-width="1.6"/><path d="M330 122.5H335" stroke="#0000ff" stroke-width="1"/><path d="M330 124.5H335" stroke="#0000ff" stroke-width="1"/><path d="M330 126.5H335" stroke="#0000ff" stroke-width="1"/><path d="M338 120.5H343" stroke="#0000ff" stroke-width="1"/><path d="M338 122.5H343" stroke="#0000ff" stroke-width="1"/><path d="M338 124.5H343" stroke="#0000ff" stroke-width="1"/><path d="M338 126.5H343" stroke="#0000ff" stroke-width="1"/><path d="M336.5 118V128.5" stroke="#000" stroke-width="1.1"/><path d="M334.5 127.5H338.5L336.5 130.5Z" fill="#000"/><path d="M361 118.5H368" stroke="#0000ff" stroke-width="1"/><path d="M361 120.5H368" stroke="#0000ff" stroke-width="1"/><path d="M361 122.5H368" stroke="#0000ff" stroke-width="1"/><path d="M361 124.5H368" stroke="#0000ff" stroke-width="1"/><path d="M366.5 121.5H371.5L374 124V129.5H366.5Z" fill="#fff" stroke="#000" stroke-width="1.3"/><path d="M368 124.5H372M368 126.5H372" stroke="#888" stroke-width="0.8"/><path d="M371 116V122M368 119H374" stroke="#00e000" stroke-width="2"/></svg>
<div class="a" style="left:315px;top:108px;width:1px;height:30px;background:#dadada"></div>
<div class="a" style="left:383px;top:108px;width:1px;height:30px;background:#dadada"></div>
<div class="t" style="left:194px;top:147px;font-size:12px;line-height:12px;letter-spacing:0.05px">Document</div>
<div class="a" style="left:252px;top:141px;width:557px;height:23px;border:1px solid #cfcfcf;background:#f5f5f5"></div>
<svg class="a" style="left:258px;top:145px;" width="13" height="13" viewBox="0 0 13 13"><path d="M1.5 11.5L2.5 8L9 1.5L11.5 4L5 10.5Z" fill="#f3c73a" stroke="#555" stroke-width="0.9"/><path d="M9 1.5L11.5 4L12.5 3L10 0.5Z" fill="#d04040"/><path d="M1.5 11.5L2.5 8L5 10.5Z" fill="#222"/></svg>
<div class="t" style="left:276px;top:147px;font-size:12px;line-height:12px;color:#a6a6a6;letter-spacing:-0.72px">21139.4_jem_NX11_1_LASER_PROJECTION_CAM-ON</div>
<div class="a" style="left:191px;top:170px;width:621px;height:853px;border:1px solid #b9b9b9;background:#fff"></div>
<div class="a" style="left:196px;top:175px;width:608px;height:138px;border:1px solid #dcdcdc;background:#f0f0f0"></div>
<svg class="a" style="left:201px;top:183px;" width="12" height="7" viewBox="0 0 12 7"><path d="M0 0H11L5.5 6Z" fill="#155f85"/></svg>
<div class="t" style="left:219px;top:181px;font-size:12px;line-height:12px;color:#1f6690;letter-spacing:-0.25px">Overview</div>
<div class="a" style="left:196px;top:315px;width:608px;height:22px;border:1px solid #dcdcdc;background:#f0f0f0"></div>
<svg class="a" style="left:204px;top:321px;" width="6" height="11" viewBox="0 0 6 11"><path d="M0 0L5.5 5.5L0 11Z" fill="#155f85"/></svg>
<div class="t" style="left:218.3px;top:321px;font-size:12px;line-height:12px;color:#1f6690">Boundary Type</div>
<div class="a" style="left:196px;top:339px;width:608px;height:22px;border:1px solid #dcdcdc;background:#f0f0f0"></div>
<svg class="a" style="left:204px;top:345px;" width="6" height="11" viewBox="0 0 6 11"><path d="M0 0L5.5 5.5L0 11Z" fill="#155f85"/></svg>
<div class="t" style="left:218.5px;top:345px;font-size:12px;line-height:12px;color:#1f6690;letter-spacing:-0.35px">Core Sample Type</div>
<div class="a" style="left:196px;top:363px;width:608px;height:113px;border:1px solid #dcdcdc;background:#f0f0f0"></div>
<svg class="a" style="left:201px;top:371px;" width="12" height="7" viewBox="0 0 12 7"><path d="M0 0H11L5.5 6Z" fill="#155f85"/></svg>
<div class="t" style="left:219px;top:369px;font-size:12px;line-height:12px;color:#1f6690">Options</div>
<div class="a" style="left:196px;top:509px;width:608px;height:506px;border:1px solid #dcdcdc;background:#f0f0f0"></div>
<svg class="a" style="left:201px;top:517px;" width="12" height="7" viewBox="0 0 12 7"><path d="M0 0H11L5.5 6Z" fill="#155f85"/></svg>
<div class="t" style="left:218px;top:515px;font-size:12px;line-height:12px;color:#1f6690;letter-spacing:-0.5px">Results</div>
<svg class="a" style="left:205px;top:211px;" width="13" height="11" viewBox="0 0 13 11"><path d="M6.5 0.5V10.5M1.5 3.5L11.5 7.5M11.5 3.5L1.5 7.5" stroke="#e00000" stroke-width="2.2"/></svg>
<div class="t" style="left:222px;top:212px;font-size:12px;line-height:12px;">Name</div>
<div class="t" style="left:205px;top:237px;font-size:12px;line-height:12px;">Laminate</div>
<div class="t" style="left:205px;top:262px;font-size:12px;line-height:12px;">Rosette</div>
<div class="t" style="left:205px;top:287px;font-size:12px;line-height:12px;">Origin</div>
<div class="a" style="left:349px;top:206px;width:446px;height:23px;border:1px solid #7a7a7a;background:#fff"></div>
<div class="t" style="left:353px;top:212px;font-size:12px;line-height:12px;letter-spacing:-1.1px">DS001</div>
<div class="a" style="left:349px;top:231px;width:421px;height:23px;border:1px solid #7a7a7a;background:#fff"></div>
<svg class="a" style="left:757px;top:240px;" width="8" height="5" viewBox="0 0 8 5"><path d="M0 0H7.5L3.75 4Z" fill="#000"/></svg>
<svg class="a" style="left:353px;top:239px;" width="14" height="8" viewBox="0 0 14 8"><path d="M0 0.5H14M0 2.5H14M0 4.5H14M0 6.5H14" stroke="#00f" stroke-width="1"/></svg>
<div class="t" style="left:372px;top:237px;font-size:12px;line-height:12px;">Child Overcore Laminate</div>
<div class="a" style="left:772px;top:231px;width:23px;height:23px;border:1px solid #7c7c7c;background:#ececec"></div>
<svg class="a" style="left:777px;top:235px;" width="15" height="15" viewBox="0 0 15 15"><rect x="0.5" y="0.5" width="13" height="13" fill="#fafafa" stroke="#5a5a5a"/><rect x="0" y="0" width="14" height="2.5" fill="#3a3a3a"/><path d="M2.5 5.5H11.5M2.5 7.5H11.5M2.5 9.5H11.5M2.5 11.5H11.5" stroke="#b8b8b8" stroke-width="1" stroke-dasharray="2 1"/></svg>
<div class="a" style="left:349px;top:256px;width:421px;height:23px;border:1px solid #7a7a7a;background:#fff"></div>
<svg class="a" style="left:757px;top:265px;" width="8" height="5" viewBox="0 0 8 5"><path d="M0 0H7.5L3.75 4Z" fill="#000"/></svg>
<svg class="a" style="left:353px;top:263px;" width="15" height="9" viewBox="0 0 15 9"><path d="M1 1.5L7 7.5H14M7.5 6.5L12.5 1.5" stroke="#000" stroke-width="1" fill="none"/></svg>
<div class="t" style="left:372px;top:262px;font-size:12px;line-height:12px;letter-spacing:-1.25px">ROS001</div>
<div class="a" style="left:772px;top:256px;width:23px;height:23px;border:1px solid #7c7c7c;background:#ececec"></div>
<svg class="a" style="left:777px;top:260px;" width="15" height="15" viewBox="0 0 15 15"><rect x="0.5" y="0.5" width="13" height="13" fill="#fafafa" stroke="#5a5a5a"/><rect x="0" y="0" width="14" height="2.5" fill="#3a3a3a"/><path d="M2.5 5.5H11.5M2.5 7.5H11.5M2.5 9.5H11.5M2.5 11.5H11.5" stroke="#b8b8b8" stroke-width="1" stroke-dasharray="2 1"/></svg>
<div class="a" style="left:349px;top:281px;width:396px;height:23px;border:1px solid #cfcfcf;background:#f5f5f5"></div>
<div class="t" style="left:353px;top:287px;font-size:12px;line-height:12px;color:#aaaaaa;letter-spacing:-0.32px">Point 59068</div>
<div class="a" style="left:747px;top:281px;width:23px;height:23px;border:1px solid #7c7c7c;background:#ececec"></div>
<svg class="a" style="left:747px;top:281px;" width="23" height="23" viewBox="0 0 23 23"><path d="M11 3V19" stroke="#a0a0a0" stroke-width="1.6"/><path d="M4 10.5H18" stroke="#333" stroke-width="1"/><circle cx="11" cy="10.5" r="3.9" fill="none" stroke="#e02828" stroke-width="1.1"/><rect x="10" y="9.5" width="2" height="2" fill="#333"/></svg>
<div class="a" style="left:772px;top:281px;width:23px;height:23px;border:1px solid #7c7c7c;background:#ececec"></div>
<svg class="a" style="left:772px;top:281px;" width="23" height="23" viewBox="0 0 23 23"><path d="M3.36 5.93L16.74 18.06L17.66 17.14L5.64 3.67Z" fill="#161616"/><path d="M17.25 3.95L3.46 16.27L5.74 18.53L17.95 4.65Z" fill="#161616"/></svg>
<div class="t" style="left:205px;top:400px;font-size:12px;line-height:12px;letter-spacing:-0.28px">Target Thickness</div>
<div class="t" style="left:205px;top:425px;font-size:12px;line-height:12px;">Target Ply Count</div>
<div class="t" style="left:205px;top:450px;font-size:12px;line-height:12px;">Max Intersection Distance</div>
<div class="a" style="left:349px;top:394px;width:396px;height:23px;border:1px solid #7a7a7a;background:#fff"></div>
<div class="t" style="left:728px;top:400px;font-size:12px;line-height:12px;">in</div>
<div class="a" style="left:747px;top:394px;width:23px;height:23px;border:1px solid #7c7c7c;background:#ececec"></div>
<div class="t" style="left:751px;top:399px;font-size:9px;line-height:9px;font-weight:bold;letter-spacing:-0.6px">f(x)</div>
<svg class="a" style="left:747px;top:394px;" width="23" height="23" viewBox="0 0 23 23"><path d="M15.5 12.5L18.5 15.5L15.5 18.5L12.5 15.5Z" fill="#e88080"/><path d="M15.5 12V19M12 15.5H19" stroke="#c01010" stroke-width="1"/><rect x="14.5" y="14.5" width="2" height="2" fill="#222"/></svg>
<div class="a" style="left:772px;top:394px;width:23px;height:23px;border:1px solid #7c7c7c;background:#ececec"></div>
<svg class="a" style="left:772px;top:394px;" width="23" height="23" viewBox="0 0 23 23"><path d="M3.36 5.93L16.74 18.06L17.66 17.14L5.64 3.67Z" fill="#161616"/><path d="M17.25 3.95L3.46 16.27L5.74 18.53L17.95 4.65Z" fill="#161616"/></svg>
<div class="a" style="left:349px;top:419px;width:396px;height:23px;border:1px solid #7a7a7a;background:#fff"></div>
<div class="t" style="left:352px;top:425px;font-size:12px;line-height:12px;">0</div>
<div class="a" style="left:747px;top:419px;width:23px;height:23px;border:1px solid #7c7c7c;background:#ececec"></div>
<div class="t" style="left:751px;top:424px;font-size:9px;line-height:9px;font-weight:bold;letter-spacing:-0.6px">f(x)</div>
<svg class="a" style="left:747px;top:419px;" width="23" height="23" viewBox="0 0 23 23"><path d="M15.5 12.5L18.5 15.5L15.5 18.5L12.5 15.5Z" fill="#e88080"/><path d="M15.5 12V19M12 15.5H19" stroke="#c01010" stroke-width="1"/><rect x="14.5" y="14.5" width="2" height="2" fill="#222"/></svg>
<div class="a" style="left:772px;top:419px;width:23px;height:23px;border:1px solid #7c7c7c;background:#ececec"></div>
<svg class="a" style="left:772px;top:419px;" width="23" height="23" viewBox="0 0 23 23"><path d="M3.36 5.93L16.74 18.06L17.66 17.14L5.64 3.67Z" fill="#161616"/><path d="M17.25 3.95L3.46 16.27L5.74 18.53L17.95 4.65Z" fill="#161616"/></svg>
<div class="a" style="left:349px;top:444px;width:446px;height:23px;border:1px solid #7a7a7a;background:#fff"></div>
<div class="t" style="left:352px;top:450px;font-size:12px;line-height:12px;">.1</div>
<div class="t" style="left:779px;top:450px;font-size:12px;line-height:12px;">in</div>
<div class="a" style="left:199px;top:481px;width:300px;height:23px;border:1px solid #7a7a7a;background:#fff"></div>
<svg class="a" style="left:304px;top:484px;" width="14" height="16" viewBox="0 0 14 16"><path d="M4.5 0.5H0.5L3 3L0.5 5.5H4.5" stroke="#000" fill="none" stroke-width="1"/><rect x="0" y="6" width="5" height="2" fill="#00f"/><path d="M0 9.5H5M0 12H5M8 6.5H14M8 9H14M8 11.5H14M8 14H14" stroke="#00f"/><path d="M6.5 3V15" stroke="#000"/><path d="M5 13L6.5 16L8 13" fill="#000"/></svg>
<div class="t" style="left:323.5px;top:487px;font-size:12px;line-height:12px;letter-spacing:-0.25px">Core Sample</div>
<div class="a" style="left:501px;top:481px;width:300px;height:23px;border:1px solid #bdbdbd;background:#f5f5f5"></div>
<svg class="a" style="left:505px;top:484px;" width="16" height="16" viewBox="0 0 16 16"><circle cx="7.8" cy="8" r="7" fill="#007800"/></svg>
<div class="t" style="left:524.5px;top:487px;font-size:12px;line-height:12px;color:#a8a8b0;letter-spacing:0.25px">Up-to-date</div>
<div class="t" style="left:206px;top:546px;font-size:12px;line-height:12px;letter-spacing:-0.33px">Total Thickness</div>
<div class="t" style="left:206px;top:571px;font-size:12px;line-height:12px;">Total Ply Count</div>
<div class="a" style="left:349px;top:540px;width:446px;height:23px;border:1px solid #cfcfcf;background:#f5f5f5"></div>
<div class="t" style="left:352px;top:546px;font-size:12px;line-height:12px;color:#a8a8a8">.007</div>
<div class="t" style="left:779px;top:546px;font-size:12px;line-height:12px;color:#a8a8a8">in</div>
<div class="a" style="left:349px;top:565px;width:446px;height:23px;border:1px solid #cfcfcf;background:#f5f5f5"></div>
<div class="t" style="left:352px;top:571px;font-size:12px;line-height:12px;color:#a8a8a8">1</div>
<div class="a" style="left:205px;top:590px;width:590px;height:416px;border:1px solid #dcdcdc;background:#f0f0f0"></div>
<svg class="a" style="left:208px;top:592px;" width="60" height="30" viewBox="0 0 60 30"><defs><linearGradient id="pb" x1="0" y1="0" x2="0" y2="1"><stop offset="0" stop-color="#f2f2f2"/><stop offset="1" stop-color="#a8a8a8"/></linearGradient><linearGradient id="fb" x1="0" y1="0" x2="1" y2="0"><stop offset="0" stop-color="#3a4ec8"/><stop offset="0.6" stop-color="#5a70e0"/><stop offset="1" stop-color="#8fb0e8"/></linearGradient></defs><path d="M14 5.5L23.8 7L22.3 15.4L12.4 14Z" fill="#cdeef8" stroke="#9ab" stroke-width="0.6"/><path d="M6 13.5Q6 11.5 8 11.5L25 12.5Q28 13 28 15.5V23.5Q28 25.6 26 25.6L7 25Q5 25 5 23Z" fill="url(#pb)" stroke="#8a8a8a" stroke-width="0.7"/><path d="M7 18.5L21.5 20V23L7 21.5Z" fill="#2a2a2a"/><path d="M9 22H20" stroke="#bbb" stroke-width="0.8"/><rect x="37" y="7" width="18" height="18" fill="url(#fb)" stroke="#2030a0" stroke-width="0.8"/><rect x="41" y="8" width="11.5" height="8.5" fill="#fff"/><rect x="41.5" y="19" width="10" height="6" fill="#0a0a14"/><rect x="43" y="20" width="2.5" height="4.5" fill="#6a80ff"/><rect x="48.5" y="20" width="2" height="4.5" fill="#6a80ff"/><rect x="37.5" y="7.5" width="1.5" height="1.5" fill="#111"/><rect x="53" y="7.5" width="1.5" height="1.5" fill="#111"/></svg>
<div class="a" style="left:208px;top:625px;width:584px;height:378px;border:1px solid #646464;background:#fff"></div>
<div class="t" style="left:438px;top:632px;font-size:12px;line-height:12px;font-weight:bold">Core Sample Analysis</div>
<div class="t" style="left:213px;top:659px;font-size:10px;line-height:10px;font-weight:bold;letter-spacing:-0.08px">Name:</div>
<div class="t" style="left:271px;top:659px;font-size:10px;line-height:10px;letter-spacing:0.3px">DS001</div>
<div class="t" style="left:213px;top:672px;font-size:10px;line-height:10px;font-weight:bold;letter-spacing:-0.08px">Parent:</div>
<div class="t" style="left:272px;top:672px;font-size:10px;line-height:10px;letter-spacing:0.3px">Child Overcore Laminate</div>
<div class="t" style="left:213px;top:685px;font-size:10px;line-height:10px;font-weight:bold;letter-spacing:-0.08px">Rosette:</div>
<div class="t" style="left:271px;top:685px;font-size:10px;line-height:10px;letter-spacing:0.3px">ROS001</div>
<div class="t" style="left:213px;top:698px;font-size:10px;line-height:10px;font-weight:bold;letter-spacing:-0.08px">Identifier:</div>
<div class="t" style="left:271px;top:698px;font-size:10px;line-height:10px;letter-spacing:0.3px">Point 59068</div>
<div class="t" style="left:213px;top:711px;font-size:10px;line-height:10px;font-weight:bold;letter-spacing:-0.08px">Location:</div>
<div class="t" style="left:270px;top:711px;font-size:10px;line-height:10px;letter-spacing:0.3px">(-11.114929, -1.861039, 1.765240)</div>
<div class="t" style="left:213px;top:724px;font-size:10px;line-height:10px;font-weight:bold;letter-spacing:-0.08px">Units:</div>
<div class="t" style="left:271px;top:724px;font-size:10px;line-height:10px;letter-spacing:0.3px">Inch (in)</div>
<div class="t" style="left:213px;top:737px;font-size:10px;line-height:10px;font-weight:bold;letter-spacing:-0.08px">Total Component Count:</div>
<div class="t" style="left:339px;top:737px;font-size:10px;line-height:10px;letter-spacing:0.3px">1</div>
<div class="t" style="left:213px;top:750px;font-size:10px;line-height:10px;font-weight:bold;letter-spacing:-0.08px">Total Thickness:</div>
<div class="t" style="left:339px;top:750px;font-size:10px;line-height:10px;letter-spacing:0.3px">0.007500</div>
<div class="a" style="left:217px;top:803px;width:97px;height:22px;background:#04617f"></div>
<div class="a" style="left:217px;top:829px;width:97px;height:23px;background:#efefef"></div>
<div class="t" style="left:217px;top:810px;width:97px;text-align:center;font-size:10px;line-height:10px;font-weight:bold;color:#fff;letter-spacing:0.2px">Name</div>
<div class="t" style="left:222px;top:836px;font-size:10px;line-height:10px;letter-spacing:0.3px"><span style="color:#0000ee;text-decoration:underline">P014</span></div>
<div class="a" style="left:318px;top:803px;width:113px;height:22px;background:#04617f"></div>
<div class="a" style="left:318px;top:829px;width:113px;height:23px;background:#efefef"></div>
<div class="t" style="left:318px;top:810px;width:113px;text-align:center;font-size:10px;line-height:10px;font-weight:bold;color:#fff;letter-spacing:0.2px">Seq/Step</div>
<div class="t" style="left:323px;top:836px;font-size:10px;line-height:10px;letter-spacing:0.3px">B40</div>
<div class="a" style="left:435px;top:803px;width:99px;height:22px;background:#04617f"></div>
<div class="a" style="left:435px;top:829px;width:99px;height:23px;background:#efefef"></div>
<div class="t" style="left:435px;top:810px;width:99px;text-align:center;font-size:10px;line-height:10px;font-weight:bold;color:#fff;letter-spacing:0.2px">Orient</div>
<div class="t" style="left:440px;top:836px;font-size:10px;line-height:10px;letter-spacing:0.3px">0</div>
<div class="a" style="left:538px;top:803px;width:123px;height:22px;background:#04617f"></div>
<div class="a" style="left:538px;top:829px;width:123px;height:23px;background:#efefef"></div>
<div class="t" style="left:538px;top:810px;width:123px;text-align:center;font-size:10px;line-height:10px;font-weight:bold;color:#fff;letter-spacing:0.2px">Material</div>
<div class="t" style="left:543px;top:836px;font-size:10px;line-height:10px;letter-spacing:0.3px">PPG-PL-3K</div>
<div class="a" style="left:665px;top:803px;width:119px;height:22px;background:#04617f"></div>
<div class="a" style="left:665px;top:829px;width:119px;height:23px;background:#efefef"></div>
<div class="t" style="left:665px;top:810px;width:119px;text-align:center;font-size:10px;line-height:10px;font-weight:bold;color:#fff;letter-spacing:0.2px">Thickness</div>
<div class="t" style="left:670px;top:836px;font-size:10px;line-height:10px;letter-spacing:0.3px">0.007500</div>
<div class="a" style="left:217px;top:894px;width:98px;height:22px;background:#04617f"></div>
<div class="a" style="left:217px;top:920px;width:98px;height:23px;background:#efefef"></div>
<div class="t" style="left:217px;top:901px;width:98px;text-align:center;font-size:10px;line-height:10px;font-weight:bold;color:#fff;letter-spacing:0.2px">Orientation</div>
<div class="t" style="left:222px;top:927px;font-size:10px;line-height:10px;letter-spacing:0.3px">0</div>
<div class="a" style="left:319px;top:894px;width:90px;height:22px;background:#04617f"></div>
<div class="a" style="left:319px;top:920px;width:90px;height:23px;background:#efefef"></div>
<div class="t" style="left:319px;top:901px;width:90px;text-align:center;font-size:10px;line-height:10px;font-weight:bold;color:#fff;letter-spacing:0.2px">Ply Count</div>
<div class="t" style="left:324px;top:927px;font-size:10px;line-height:10px;letter-spacing:0.3px">1</div>
<div class="a" style="left:413px;top:894px;width:100px;height:22px;background:#04617f"></div>
<div class="a" style="left:413px;top:920px;width:100px;height:23px;background:#efefef"></div>
<div class="t" style="left:413px;top:901px;width:100px;text-align:center;font-size:10px;line-height:10px;font-weight:bold;color:#fff;letter-spacing:0.2px">Percentage</div>
<div class="t" style="left:418px;top:927px;font-size:10px;line-height:10px;letter-spacing:0.3px">100</div>
<div class="a" style="left:517px;top:894px;width:94px;height:22px;background:#04617f"></div>
<div class="a" style="left:517px;top:920px;width:94px;height:23px;background:#efefef"></div>
<div class="t" style="left:517px;top:901px;width:94px;text-align:center;font-size:10px;line-height:10px;font-weight:bold;color:#fff;letter-spacing:0.2px">Thickness</div>
<div class="t" style="left:522px;top:927px;font-size:10px;line-height:10px;letter-spacing:0.3px">0.0075</div>
<div class="a" style="left:615px;top:894px;width:167px;height:22px;background:#04617f"></div>
<div class="a" style="left:615px;top:920px;width:167px;height:23px;background:#efefef"></div>
<div class="t" style="left:615px;top:901px;width:167px;text-align:center;font-size:10px;line-height:10px;font-weight:bold;color:#fff;letter-spacing:0.2px">Percentage by Thickness</div>
<div class="t" style="left:620px;top:927px;font-size:10px;line-height:10px;letter-spacing:0.3px">100</div>
<svg class="a" style="left:216px;top:988px;" width="5" height="8" viewBox="0 0 5 8"><path d="M4.5 0V7.5L0 3.75Z" fill="#000"/></svg>
<div class="a" style="left:229px;top:983px;width:540px;height:17px;background:#dadada"></div>
<svg class="a" style="left:779px;top:988px;" width="5" height="8" viewBox="0 0 5 8"><path d="M0 0V7.5L4.5 3.75Z" fill="#000"/></svg>
<div class="a" style="left:189px;top:432px;width:197px;height:48px;border:2px solid #ff0000;filter:drop-shadow(3px 3px 3px rgba(0,0,0,0.5))"></div>
<div class="a" style="left:650px;top:1028px;width:77px;height:25px;border:1px solid #0e6496;box-shadow:inset 0 0 0 1px #fff;background:#efefef"></div>
<div class="a" style="left:733px;top:1028px;width:77px;height:25px;border:1px solid #0e6496;box-shadow:inset 0 0 0 1px #fff;background:#efefef"></div>
<div class="t" style="left:650px;top:1035px;font-size:12px;line-height:12px;width:77px;text-align:center;color:#1d5d8a;letter-spacing:0">OK</div>
<div class="t" style="left:733px;top:1035px;font-size:12px;line-height:12px;width:77px;text-align:center;color:#1d5d8a;letter-spacing:-0.1px">Cancel</div>
<div class="t" style="left:14px;top:1060px;font-size:12px;line-height:12px;letter-spacing:-0.24px">Core Sample performed. [ DS001 ]</div>
<div class="a" style="left:644px;top:1057px;width:168px;height:17px;border-top:1px solid #a0a0a0;border-left:1px solid #a0a0a0;border-bottom:1px solid #e8e8e8"></div>
<div class="t" style="left:646px;top:1060px;font-size:12px;line-height:12px;letter-spacing:-0.24px">1 selected, 1 shown, 1 available</div>
</body></html>
